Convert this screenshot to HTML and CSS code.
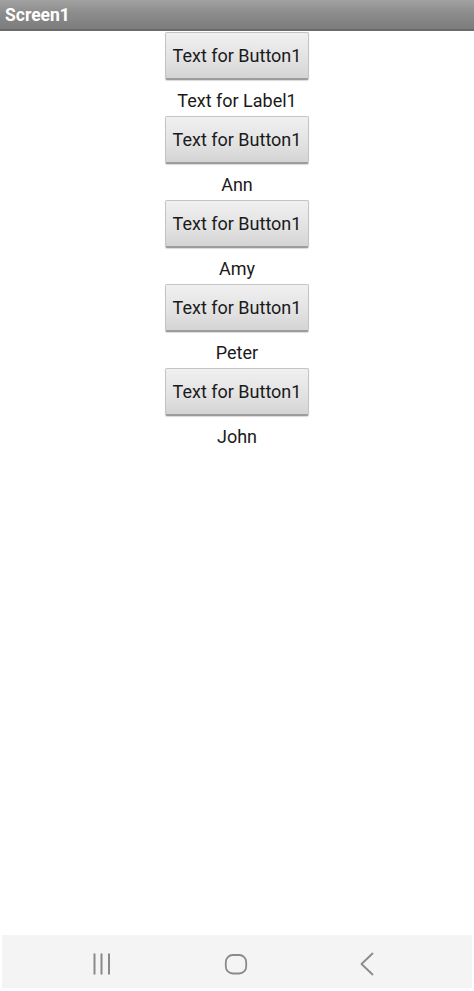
FILE: index.html
```html
<!DOCTYPE html>
<html>
<head>
<meta charset="utf-8">
<link rel="stylesheet" href="styles.css">
</head>
<body>
<div class="app">
  <header class="titlebar">Screen1</header>
  <main class="content">
    <button class="btn">Text for Button1</button>
    <div class="label">Text for Label1</div>
    <button class="btn">Text for Button1</button>
    <div class="label">Ann</div>
    <button class="btn">Text for Button1</button>
    <div class="label">Amy</div>
    <button class="btn">Text for Button1</button>
    <div class="label">Peter</div>
    <button class="btn">Text for Button1</button>
    <div class="label">John</div>
  </main>
  <nav class="navbar">
    <svg class="nav-icon" width="24" height="24" viewBox="0 0 24 24">
      <line x1="5.5" y1="1.5" x2="5.5" y2="22.5" stroke="#8a8a8a" stroke-width="2"/>
      <line x1="12.5" y1="1.5" x2="12.5" y2="22.5" stroke="#8a8a8a" stroke-width="2"/>
      <line x1="20" y1="1.5" x2="20" y2="22.5" stroke="#8a8a8a" stroke-width="2"/>
    </svg>
    <svg class="nav-icon nav-home" width="24" height="24" viewBox="0 0 24 24">
      <rect x="1.8" y="3" width="20.4" height="18.5" rx="7" ry="7" fill="none" stroke="#8a8a8a" stroke-width="1.8"/>
    </svg>
    <svg class="nav-icon" width="24" height="24" viewBox="0 0 24 24">
      <polyline points="17.5,1.5 6.5,12 17.5,22.5" fill="none" stroke="#8a8a8a" stroke-width="1.8" stroke-linecap="round" stroke-linejoin="round"/>
    </svg>
  </nav>
</div>
</body>
</html>
```

FILE: styles.css
```css
html, body {
  margin: 0;
  padding: 0;
  background: #ffffff;
}

.app {
  width: 474px;
  height: 991px;
  display: flex;
  flex-direction: column;
  font-family: Roboto, "Liberation Sans", sans-serif;
}

.titlebar {
  height: 31px;
  box-sizing: border-box;
  padding-left: 5px;
  display: flex;
  align-items: center;
  color: #ffffff;
  font-weight: bold;
  font-size: 17.5px;
  background: linear-gradient(to bottom, #a2a2a2 0%, #8c8c8c 45%, #7c7c7c 100%);
  border-bottom: 2px solid #6a6a6a;
}

.content {
  flex: 1;
  display: flex;
  flex-direction: column;
  align-items: center;
  padding-top: 1px;
}

.btn {
  width: 144px;
  height: 48px;
  margin: 0;
  padding: 0;
  font-family: Roboto, "Liberation Sans", sans-serif;
  font-size: 18px;
  color: #1a1a1a;
  border: 1px solid #c4c4c4;
  border-bottom: 2px solid #9c9c9c;
  border-radius: 2px;
  background: linear-gradient(to bottom, #f0f0f0 0%, #e2e2e2 60%, #d4d4d4 100%);
  box-shadow: 0 1px 1px rgba(0,0,0,0.15);
}

.label {
  margin-top: 11px;
  margin-bottom: 5px;
  height: 20px;
  line-height: 20px;
  font-size: 18px;
  color: #1a1a1a;
  text-align: center;
}

.navbar {
  height: 53px;
  box-sizing: border-box;
  margin: 0 2px 3px 2px;
  background: #f4f4f4;
  display: flex;
  align-items: center;
  justify-content: space-between;
  padding: 4px 93px 0 87px;
}

.nav-icon {
  display: block;
}

.nav-home {
  margin-left: 4px;
}
```
